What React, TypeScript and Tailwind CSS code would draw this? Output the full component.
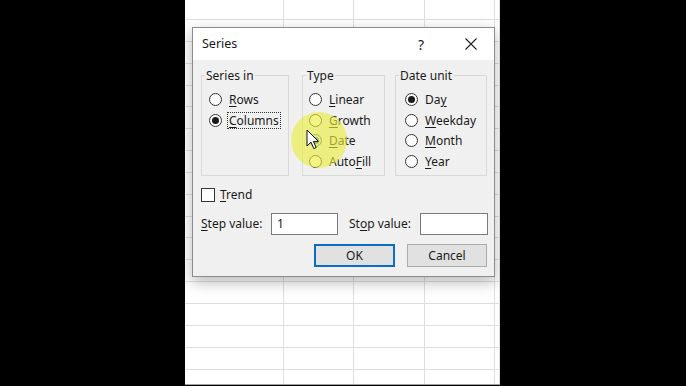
import React from "react";

const COLS = ["w-[99px]", "w-[70px]", "w-[71px]", "w-[70px]", "w-[5px]"];
const ROWS = Array.from({ length: 18 }, (_, i) => i);

function Radio({
  label,
  ul,
  checked,
  hover,
  focus,
}: {
  label: string;
  ul: number;
  checked?: boolean;
  hover?: boolean;
  focus?: boolean;
}) {
  return (
    <div className="flex h-[20.7px] items-center">
      <span
        className={
          "flex h-[13px] w-[13px] items-center justify-center rounded-full border " +
          (hover ? "border-[#1a6fb0] bg-[#d6e8f7]" : "border-[#333] bg-white")
        }
      >
        {checked && <span className="h-[7px] w-[7px] rounded-full bg-[#1a1a1a]" />}
        {hover && <span className="h-[7px] w-[7px] rounded-full bg-[#1f7a8a]" />}
      </span>
      <span
        className={
          "ml-[5px] px-[1px] leading-[15px] " +
          (focus ? "border border-dotted border-[#333]" : "border border-transparent")
        }
      >
        {label.slice(0, ul)}
        <span className="underline underline-offset-2">{label[ul]}</span>
        {label.slice(ul + 1)}
      </span>
    </div>
  );
}

function Group({
  title,
  width,
  pad,
  children,
}: {
  title: string;
  width: string;
  pad: string;
  children: React.ReactNode;
}) {
  return (
    <div className={"relative h-[101px] border border-[#d9d9d9] " + width + " " + pad}>
      <span className="absolute -top-[8px] left-[3px] bg-[#f0f0f0] px-[1px] leading-[16px]">
        {title}
      </span>
      <div className="flex flex-col pt-[13px]">{children}</div>
    </div>
  );
}

export default function App() {
  return (
    <div
      className="relative flex h-[386px] w-[686px] overflow-hidden bg-black"
      style={{ fontFamily: "'Noto Sans', 'Liberation Sans', sans-serif" }}
    >
      <div className="w-[185px]" />

      {/* spreadsheet */}
      <div className="flex h-[385px] w-[315px] flex-col overflow-hidden border-b border-[#a0a0a0] bg-white">
        <div className="flex h-[20px] shrink-0">
          {COLS.map((c, i) => (
            <div key={i} className={c + " shrink-0 border-b border-r border-[#dedede]"} />
          ))}
        </div>
        {ROWS.map((r) => (
          <div key={r} className="flex h-[21.85px] shrink-0">
            {COLS.map((c, i) => (
              <div key={i} className={c + " shrink-0 border-b border-r border-[#dedede]"} />
            ))}
          </div>
        ))}
      </div>

      {/* Series dialog */}
      <div className="absolute left-[192px] top-[27px] flex h-[250px] w-[303px] flex-col border border-[#8c8c8c] bg-[#f0f0f0] text-[12px] text-[#1a1a1a] shadow-[0_5px_14px_rgba(0,0,0,0.28)]">
        <div className="flex h-[32px] items-center bg-white pl-[9px] pr-[17px]">
          <span className="text-[12.5px]">Series</span>
          <span className="ml-auto mr-[41px] text-[14px]">?</span>
          <svg width="12" height="12" viewBox="0 0 12 12">
            <path d="M0.5 0.5 L11.5 11.5 M11.5 0.5 L0.5 11.5" stroke="#222" strokeWidth="1.1" />
          </svg>
        </div>

        <div className="flex flex-col pl-[8px] pr-[6px]">
          <div className="mt-[15px] flex">
            <Group title="Series in" width="w-[88px]" pad="pl-[7px]">
              <Radio label="Rows" ul={0} />
              <Radio label="Columns" ul={0} checked focus />
            </Group>
            <div className="w-[13px]" />
            <Group title="Type" width="w-[83px]" pad="pl-[6px]">
              <Radio label="Linear" ul={0} />
              <Radio label="Growth" ul={0} />
              <Radio label="Date" ul={0} hover />
              <Radio label="AutoFill" ul={4} />
            </Group>
            <div className="w-[10px]" />
            <Group title="Date unit" width="w-[92px]" pad="pl-[9px]">
              <Radio label="Day" ul={2} checked />
              <Radio label="Weekday" ul={0} />
              <Radio label="Month" ul={0} />
              <Radio label="Year" ul={0} />
            </Group>
          </div>

          <div className="mt-[12px] flex h-[14px] items-center">
            <span className="h-[14px] w-[14px] border border-[#333] bg-white" />
            <span className="ml-[5px]">
              <span className="underline underline-offset-2">T</span>rend
            </span>
          </div>

          <div className="mt-[11px] flex h-[22px] items-center">
            <span className="w-[70px]">
              <span className="underline underline-offset-2">S</span>tep value:
            </span>
            <div className="flex h-[22px] w-[67px] items-center border border-[#7a7a7a] bg-white pl-[5px]">
              1
            </div>
            <span className="ml-[11px] w-[71px]">
              St<span className="underline underline-offset-2">o</span>p value:
            </span>
            <div className="h-[22px] w-[68px] border border-[#7a7a7a] bg-white" />
          </div>

          <div className="mt-[9px] flex justify-end gap-[12px] pr-[1px]">
            <div className="flex h-[23px] w-[81px] items-center justify-center border-2 border-[#0a6cc2] bg-[#e1e1e1]">
              OK
            </div>
            <div className="flex h-[23px] w-[80px] items-center justify-center border border-[#adadad] bg-[#e1e1e1]">
              Cancel
            </div>
          </div>
        </div>
      </div>

      {/* click highlight + pointer */}
      <div className="absolute left-[291px] top-[112px] h-[56px] w-[56px] rounded-full bg-[rgba(236,238,60,0.62)]" />
      <svg className="absolute left-[306px] top-[129px]" width="14" height="22" viewBox="0 0 14 22">
        <path
          d="M1 1 L1 17 L5 13.2 L7.8 19.6 L10.2 18.6 L7.4 12.4 L12.4 12.4 Z"
          fill="white"
          stroke="#111"
          strokeWidth="1"
          strokeLinejoin="round"
        />
      </svg>
    </div>
  );
}
